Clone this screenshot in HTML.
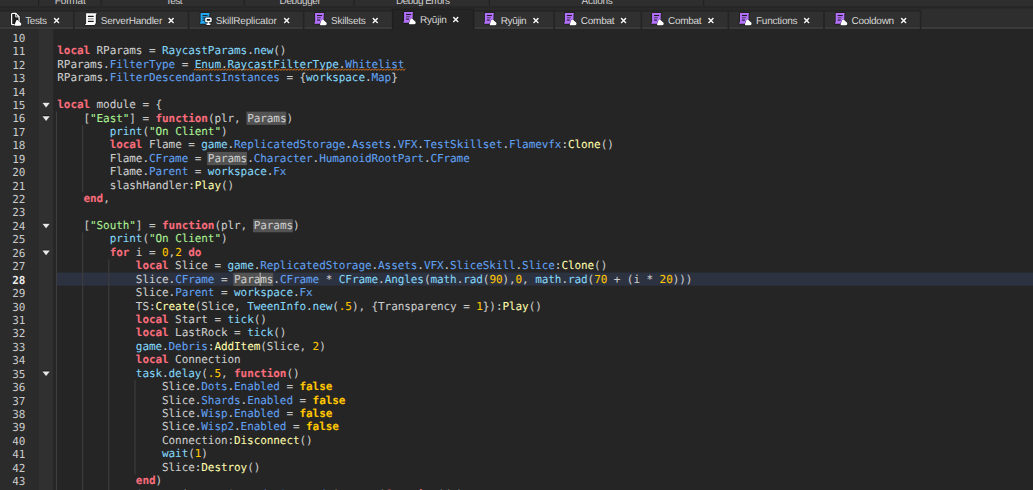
<!DOCTYPE html>
<html><head><meta charset="utf-8"><title>Script Editor</title>
<style>
html,body{margin:0;padding:0;background:#252525;overflow:hidden}
#root{position:relative;width:1033px;height:490px;overflow:hidden;background:#252525;font-family:"Liberation Sans",sans-serif}
#bg{position:absolute;left:0;top:0}
#rib{position:absolute;left:0;top:0;width:1033px;height:6.4px;overflow:hidden}
.rl{position:absolute;text-rendering:geometricPrecision;top:-4.4px;font-size:10px;line-height:12px;color:#d0d0d0;white-space:nowrap}
.tt{position:absolute;text-rendering:geometricPrecision;font-size:10px;line-height:12px;color:#d6d6d6;white-space:nowrap}
.ln,.cl{position:absolute;text-rendering:geometricPrecision;font-family:"DejaVu Sans Mono","Liberation Mono",monospace;font-size:11px;line-height:13.43px;height:13.43px;white-space:pre;letter-spacing:-0.077px;color:#cccccc}
.ln{left:12.3px;width:26px;color:#cacaca}
.ln.cur{font-weight:bold;color:#ececec}
.cl{left:57.30px;-webkit-text-stroke:0.08px}
.k{color:#f86d7c;font-weight:bold}
.b{color:#84d6f7}
.p{color:#61a1f1}
.s{color:#adf195}
.n{color:#ffc600}
.B{color:#ffc600;font-weight:bold}
.f{color:#fdfbac}
</style></head><body>
<div id="root">
<svg id="bg" width="1033" height="490" viewBox="0 0 1033 490">
<rect x="0.00" y="0.00" width="1033.00" height="6.60" fill="#2e2e2e"/>
<rect x="0.00" y="6.60" width="1033.00" height="1.80" fill="#262626"/>
<rect x="0.00" y="8.40" width="1033.00" height="18.60" fill="#2e2e2e"/>
<rect x="0.00" y="26.90" width="1033.00" height="2.20" fill="#3a3a3a"/>
<rect x="38.10" y="0.00" width="1.20" height="5.60" fill="#222222"/>
<rect x="100.60" y="0.00" width="1.20" height="5.60" fill="#222222"/>
<rect x="243.70" y="0.00" width="1.20" height="5.60" fill="#222222"/>
<rect x="353.50" y="0.00" width="1.20" height="5.60" fill="#222222"/>
<rect x="488.80" y="0.00" width="1.20" height="5.60" fill="#222222"/>
<rect x="703.10" y="0.00" width="1.20" height="5.60" fill="#222222"/>
<rect x="0.00" y="9.70" width="921.40" height="17.30" fill="#242424"/>
<rect x="0.00" y="11.55" width="73.00" height="15.35" fill="#303030"/>
<rect x="74.60" y="11.55" width="113.10" height="15.35" fill="#303030"/>
<rect x="189.30" y="11.55" width="113.50" height="15.35" fill="#303030"/>
<rect x="304.40" y="11.55" width="87.40" height="15.35" fill="#303030"/>
<rect x="474.50" y="11.55" width="78.90" height="15.35" fill="#303030"/>
<rect x="555.00" y="11.55" width="85.50" height="15.35" fill="#303030"/>
<rect x="642.10" y="11.55" width="85.50" height="15.35" fill="#303030"/>
<rect x="729.20" y="11.55" width="94.00" height="15.35" fill="#303030"/>
<rect x="824.80" y="11.55" width="95.00" height="15.35" fill="#303030"/>
<rect x="73.00" y="26.90" width="1.60" height="2.20" fill="#232323"/>
<rect x="187.70" y="26.90" width="1.60" height="2.20" fill="#232323"/>
<rect x="302.80" y="26.90" width="1.60" height="2.20" fill="#232323"/>
<rect x="391.80" y="26.90" width="1.60" height="2.20" fill="#232323"/>
<rect x="472.90" y="26.90" width="1.60" height="2.20" fill="#232323"/>
<rect x="553.40" y="26.90" width="1.60" height="2.20" fill="#232323"/>
<rect x="640.50" y="26.90" width="1.60" height="2.20" fill="#232323"/>
<rect x="727.60" y="26.90" width="1.60" height="2.20" fill="#232323"/>
<rect x="823.20" y="26.90" width="1.60" height="2.20" fill="#232323"/>
<rect x="919.80" y="26.90" width="1.60" height="2.20" fill="#232323"/>
<rect x="392.20" y="8.70" width="81.90" height="20.60" fill="#1f1f1f"/>
<rect x="393.40" y="9.70" width="79.50" height="19.60" fill="#252525"/>
<rect x="0.00" y="29.10" width="1033.00" height="460.90" fill="#252525"/>
<rect x="393.50" y="28.60" width="79.30" height="1.00" fill="#252525"/>
<rect x="0.00" y="29.10" width="38.60" height="460.90" fill="#2b2b2b"/>
<rect x="38.60" y="29.10" width="14.70" height="460.90" fill="#303030"/>
<rect x="57.00" y="272.54" width="976.00" height="13.13" fill="#2d3241"/>
<rect x="55.90" y="111.63" width="1.10" height="389.47" fill="#3e3e3e"/>
<rect x="82.08" y="125.06" width="1.10" height="67.15" fill="#3e3e3e"/>
<rect x="82.08" y="232.50" width="1.10" height="268.60" fill="#3e3e3e"/>
<rect x="108.27" y="259.36" width="1.10" height="241.74" fill="#3e3e3e"/>
<rect x="134.45" y="380.23" width="1.10" height="94.01" fill="#3e3e3e"/>
<rect x="246.43" y="111.63" width="39.88" height="13.23" fill="#535353"/>
<rect x="207.16" y="151.92" width="39.88" height="13.23" fill="#535353"/>
<rect x="252.98" y="219.07" width="39.88" height="13.23" fill="#535353"/>
<rect x="233.34" y="272.79" width="39.88" height="13.23" fill="#535353"/>
<path d="M193.87 70.21l1.5 -1.1l1.5 1.1l1.5 -1.1l1.5 1.1l1.5 -1.1l1.5 1.1l1.5 -1.1l1.5 1.1l1.5 -1.1l1.5 1.1l1.5 -1.1l1.5 1.1l1.5 -1.1l1.5 1.1l1.5 -1.1l1.5 1.1l1.5 -1.1l1.5 1.1l1.5 -1.1l1.5 1.1l1.5 -1.1l1.5 1.1l1.5 -1.1l1.5 1.1l1.5 -1.1l1.5 1.1l1.5 -1.1l1.5 1.1l1.5 -1.1l1.5 1.1l1.5 -1.1l1.5 1.1l1.5 -1.1l1.5 1.1l1.5 -1.1l1.5 1.1l1.5 -1.1l1.5 1.1l1.5 -1.1l1.5 1.1l1.5 -1.1l1.5 1.1l1.5 -1.1l1.5 1.1l1.5 -1.1l1.5 1.1l1.5 -1.1l1.5 1.1l1.5 -1.1l1.5 1.1l1.5 -1.1l1.5 1.1l1.5 -1.1l1.5 1.1l1.5 -1.1l1.5 1.1l1.5 -1.1l1.5 1.1l1.5 -1.1l1.5 1.1l1.5 -1.1l1.5 1.1l1.5 -1.1l1.5 1.1l1.5 -1.1l1.5 1.1l1.5 -1.1l1.5 1.1l1.5 -1.1l1.5 1.1l1.5 -1.1l1.5 1.1l1.5 -1.1l1.5 1.1l1.5 -1.1l1.5 1.1l1.5 -1.1l1.5 1.1l1.5 -1.1l1.5 1.1l1.5 -1.1l1.5 1.1l1.5 -1.1l1.5 1.1l1.5 -1.1l1.5 1.1l1.5 -1.1l1.5 1.1l1.5 -1.1l1.5 1.1l1.5 -1.1l1.5 1.1l1.5 -1.1l1.5 1.1l1.5 -1.1l1.5 1.1l1.5 -1.1l1.5 1.1l1.5 -1.1l1.5 1.1l1.5 -1.1l1.5 1.1l1.5 -1.1l1.5 1.1l1.5 -1.1l1.5 1.1l1.5 -1.1l1.5 1.1l1.5 -1.1l1.5 1.1l1.5 -1.1l1.5 1.1l1.5 -1.1l1.5 1.1l1.5 -1.1l1.5 1.1l1.5 -1.1l1.5 1.1l1.5 -1.1l1.5 1.1l1.5 -1.1l1.5 1.1l1.5 -1.1l1.5 1.1l1.5 -1.1l1.5 1.1l1.5 -1.1l1.5 1.1l1.5 -1.1l1.5 1.1l1.5 -1.1l1.5 1.1l1.5 -1.1l1.5 1.1l1.5 -1.1l1.5 1.1l1.5 -1.1l1.5 1.1l1.5 -1.1l1.5 1.1l1.5 -1.1" fill="none" stroke="#d9741f" stroke-width="1.0" stroke-linejoin="round"/>
<rect x="259.68" y="272.59" width="1.00" height="13.13" fill="#c4c4c4"/>
<path d="M42.2 101.90h7.8v.6l-3.9 4.4l-3.9-4.4z" fill="#111" opacity=".7"/>
<path d="M42.4 102.80h7.4l-3.7 4.7z" fill="#e8e8e8"/>
<path d="M42.2 115.33h7.8v.6l-3.9 4.4l-3.9-4.4z" fill="#111" opacity=".7"/>
<path d="M42.4 116.23h7.4l-3.7 4.7z" fill="#e8e8e8"/>
<path d="M42.2 222.77h7.8v.6l-3.9 4.4l-3.9-4.4z" fill="#111" opacity=".7"/>
<path d="M42.4 223.67h7.4l-3.7 4.7z" fill="#e8e8e8"/>
<path d="M42.2 249.63h7.8v.6l-3.9 4.4l-3.9-4.4z" fill="#111" opacity=".7"/>
<path d="M42.4 250.53h7.4l-3.7 4.7z" fill="#e8e8e8"/>
<path d="M42.2 370.50h7.8v.6l-3.9 4.4l-3.9-4.4z" fill="#111" opacity=".7"/>
<path d="M42.4 371.40h7.4l-3.7 4.7z" fill="#e8e8e8"/>
<g transform="translate(11.00 13.20)"><path d="M1.6 .1h3.2l3.3 3.5v6.9c0 .6-.4 1-1 1H1.6c-.6 0-1-.4-1-1V1.1c0-.6.4-1 1-1z" fill="#1d1d1d" stroke="#0c0c0c" stroke-width="2.6" opacity=".6"/><path d="M1.6 .1h3.2l3.3 3.5v6.9c0 .6-.4 1-1 1H1.6c-.6 0-1-.4-1-1V1.1c0-.6.4-1 1-1z" fill="#1d1d1d" stroke="#ffffff" stroke-width="1.25"/><path d="M4.7 .3v3.4h3.2" fill="none" stroke="#ffffff" stroke-width=".9"/></g><g transform="translate(14.30 19.90)"><path d="M2.65 0C3 0 3.3.2 3.5.4L6.6 3.2C7.1 3.7 7.1 4.6 6.8 5.1 6.6 5.5 6.2 5.8 5.6 5.8H1.3C.6 5.8.2 5.3.4 4.5L1.9.7C2 .3 2.3 0 2.65 0Z" fill="#0c0c0c" stroke="#0c0c0c" stroke-width="1.0" opacity=".5"/><path d="M2.65 0C3 0 3.3.2 3.5.4L6.6 3.2C7.1 3.7 7.1 4.6 6.8 5.1 6.6 5.5 6.2 5.8 5.6 5.8H1.3C.6 5.8.2 5.3.4 4.5L1.9.7C2 .3 2.3 0 2.65 0Z" fill="#ffffff"/></g>
<path d="M54.10 18.15l4.9 4.9m0-4.9l-4.9 4.9" stroke="#101010" stroke-width="2.8" opacity=".45" fill="none"/>
<path d="M54.10 18.15l4.9 4.9m0-4.9l-4.9 4.9" stroke="#f2f2f2" stroke-width="1.5" fill="none"/>
<g transform="translate(84.90 13.20)"><path d="M1.4 -.4h10.6l.5.5-1 1.7v8l-1.6 2.4H-.4l-.3-.8 1.6-1.6z" fill="#0c0c0c" opacity=".75"/><path d="M1.2 0h10.7l-1 1.7v8.2l-1.2 1.9H0l1.2-1.4z" fill="#ffffff"/><path d="M3 3.1h5.8M3 8.2h5.8" stroke="#1a1a1a" stroke-width="1.15"/><path d="M3 5.65h5.8" stroke="#8a8a8a" stroke-width="1.15"/></g>
<path d="M168.70 18.15l4.9 4.9m0-4.9l-4.9 4.9" stroke="#101010" stroke-width="2.8" opacity=".45" fill="none"/>
<path d="M168.70 18.15l4.9 4.9m0-4.9l-4.9 4.9" stroke="#f2f2f2" stroke-width="1.5" fill="none"/>
<g transform="translate(199.80 13.00)"><path d="M.8 0H10l-.6 1.4v7.8l-.8 1.6H0V10l.8-1z" fill="#0c0c0c" stroke="#0c0c0c" stroke-width="1.5" opacity=".5"/><path d="M.8 0H10l-.6 1.4v7.8l-.8 1.6H0V10l.8-1z" fill="#25a8f3"/><path d="M2.7 2.6h5.1" stroke="#1b242c" stroke-width="1.15"/><path d="M2.7 4.9h2.4" stroke="#1b242c" stroke-width="1.15"/><path d="M2.7 7.2h2.0" stroke="#1b242c" stroke-width="1.15"/><rect x="4.7" y="3.8" width="7.9" height="6.1" rx="1.7" fill="#0c0c0c" opacity=".8"/><path d="M6.0 10.0h5v2.7h-5z" fill="#0c0c0c" opacity=".5"/><rect x="5.4" y="4.5" width="6.5" height="4.8" rx="1.2" fill="#fff"/><rect x="6.9" y="6.1" width="3.5" height="1.7" rx=".5" fill="#0c0c0c"/><path d="M7.9 9.2h1.5v1.4h1.2v1.5H6.6v-1.5h1.3z" fill="#fff"/></g>
<path d="M284.20 18.15l4.9 4.9m0-4.9l-4.9 4.9" stroke="#101010" stroke-width="2.8" opacity=".45" fill="none"/>
<path d="M284.20 18.15l4.9 4.9m0-4.9l-4.9 4.9" stroke="#f2f2f2" stroke-width="1.5" fill="none"/>
<g transform="translate(314.30 12.90)"><path d="M.8 0H10l-.6 1.4v7.8l-.8 1.6H0V10l.8-1z" fill="#0c0c0c" stroke="#0c0c0c" stroke-width="1.5" opacity=".5"/><path d="M.8 0H10l-.6 1.4v7.8l-.8 1.6H0V10l.8-1z" fill="#b470ff"/><path d="M2.7 2.6h5.1" stroke="#1f1a26" stroke-width="1.15"/><path d="M2.7 4.9h3.9" stroke="#50406e" stroke-width="1.15"/><path d="M2.7 7.2h3.0" stroke="#1f1a26" stroke-width="1.15"/></g><g transform="translate(319.70 19.40)"><path d="M2.65 0C3 0 3.3.2 3.5.4L6.6 3.2C7.1 3.7 7.1 4.6 6.8 5.1 6.6 5.5 6.2 5.8 5.6 5.8H1.3C.6 5.8.2 5.3.4 4.5L1.9.7C2 .3 2.3 0 2.65 0Z" fill="#0c0c0c" stroke="#0c0c0c" stroke-width="1.0" opacity=".5"/><path d="M2.65 0C3 0 3.3.2 3.5.4L6.6 3.2C7.1 3.7 7.1 4.6 6.8 5.1 6.6 5.5 6.2 5.8 5.6 5.8H1.3C.6 5.8.2 5.3.4 4.5L1.9.7C2 .3 2.3 0 2.65 0Z" fill="#ffffff"/></g>
<path d="M372.80 18.15l4.9 4.9m0-4.9l-4.9 4.9" stroke="#101010" stroke-width="2.8" opacity=".45" fill="none"/>
<path d="M372.80 18.15l4.9 4.9m0-4.9l-4.9 4.9" stroke="#f2f2f2" stroke-width="1.5" fill="none"/>
<g transform="translate(403.30 11.90)"><path d="M.8 0H10l-.6 1.4v7.8l-.8 1.6H0V10l.8-1z" fill="#0c0c0c" stroke="#0c0c0c" stroke-width="1.5" opacity=".5"/><path d="M.8 0H10l-.6 1.4v7.8l-.8 1.6H0V10l.8-1z" fill="#b470ff"/><path d="M2.7 2.6h5.1" stroke="#1f1a26" stroke-width="1.15"/><path d="M2.7 4.9h3.9" stroke="#50406e" stroke-width="1.15"/><path d="M2.7 7.2h3.0" stroke="#1f1a26" stroke-width="1.15"/></g><g transform="translate(408.70 18.40)"><path d="M2.65 0C3 0 3.3.2 3.5.4L6.6 3.2C7.1 3.7 7.1 4.6 6.8 5.1 6.6 5.5 6.2 5.8 5.6 5.8H1.3C.6 5.8.2 5.3.4 4.5L1.9.7C2 .3 2.3 0 2.65 0Z" fill="#0c0c0c" stroke="#0c0c0c" stroke-width="1.0" opacity=".5"/><path d="M2.65 0C3 0 3.3.2 3.5.4L6.6 3.2C7.1 3.7 7.1 4.6 6.8 5.1 6.6 5.5 6.2 5.8 5.6 5.8H1.3C.6 5.8.2 5.3.4 4.5L1.9.7C2 .3 2.3 0 2.65 0Z" fill="#ffffff"/></g>
<path d="M453.30 17.15l4.9 4.9m0-4.9l-4.9 4.9" stroke="#101010" stroke-width="2.8" opacity=".45" fill="none"/>
<path d="M453.30 17.15l4.9 4.9m0-4.9l-4.9 4.9" stroke="#f2f2f2" stroke-width="1.5" fill="none"/>
<g transform="translate(484.10 12.90)"><path d="M.8 0H10l-.6 1.4v7.8l-.8 1.6H0V10l.8-1z" fill="#0c0c0c" stroke="#0c0c0c" stroke-width="1.5" opacity=".5"/><path d="M.8 0H10l-.6 1.4v7.8l-.8 1.6H0V10l.8-1z" fill="#b470ff"/><path d="M2.7 2.6h5.1" stroke="#1f1a26" stroke-width="1.15"/><path d="M2.7 4.9h3.9" stroke="#50406e" stroke-width="1.15"/><path d="M2.7 7.2h3.0" stroke="#1f1a26" stroke-width="1.15"/></g><g transform="translate(489.50 19.40)"><path d="M2.65 0C3 0 3.3.2 3.5.4L6.6 3.2C7.1 3.7 7.1 4.6 6.8 5.1 6.6 5.5 6.2 5.8 5.6 5.8H1.3C.6 5.8.2 5.3.4 4.5L1.9.7C2 .3 2.3 0 2.65 0Z" fill="#0c0c0c" stroke="#0c0c0c" stroke-width="1.0" opacity=".5"/><path d="M2.65 0C3 0 3.3.2 3.5.4L6.6 3.2C7.1 3.7 7.1 4.6 6.8 5.1 6.6 5.5 6.2 5.8 5.6 5.8H1.3C.6 5.8.2 5.3.4 4.5L1.9.7C2 .3 2.3 0 2.65 0Z" fill="#ffffff"/></g>
<path d="M533.50 18.15l4.9 4.9m0-4.9l-4.9 4.9" stroke="#101010" stroke-width="2.8" opacity=".45" fill="none"/>
<path d="M533.50 18.15l4.9 4.9m0-4.9l-4.9 4.9" stroke="#f2f2f2" stroke-width="1.5" fill="none"/>
<g transform="translate(564.10 12.90)"><path d="M.8 0H10l-.6 1.4v7.8l-.8 1.6H0V10l.8-1z" fill="#0c0c0c" stroke="#0c0c0c" stroke-width="1.5" opacity=".5"/><path d="M.8 0H10l-.6 1.4v7.8l-.8 1.6H0V10l.8-1z" fill="#b470ff"/><path d="M2.7 2.6h5.1" stroke="#1f1a26" stroke-width="1.15"/><path d="M2.7 4.9h3.9" stroke="#50406e" stroke-width="1.15"/><path d="M2.7 7.2h3.0" stroke="#1f1a26" stroke-width="1.15"/></g><g transform="translate(569.50 19.40)"><path d="M2.65 0C3 0 3.3.2 3.5.4L6.6 3.2C7.1 3.7 7.1 4.6 6.8 5.1 6.6 5.5 6.2 5.8 5.6 5.8H1.3C.6 5.8.2 5.3.4 4.5L1.9.7C2 .3 2.3 0 2.65 0Z" fill="#0c0c0c" stroke="#0c0c0c" stroke-width="1.0" opacity=".5"/><path d="M2.65 0C3 0 3.3.2 3.5.4L6.6 3.2C7.1 3.7 7.1 4.6 6.8 5.1 6.6 5.5 6.2 5.8 5.6 5.8H1.3C.6 5.8.2 5.3.4 4.5L1.9.7C2 .3 2.3 0 2.65 0Z" fill="#ffffff"/></g>
<path d="M621.10 18.15l4.9 4.9m0-4.9l-4.9 4.9" stroke="#101010" stroke-width="2.8" opacity=".45" fill="none"/>
<path d="M621.10 18.15l4.9 4.9m0-4.9l-4.9 4.9" stroke="#f2f2f2" stroke-width="1.5" fill="none"/>
<g transform="translate(651.30 12.90)"><path d="M.8 0H10l-.6 1.4v7.8l-.8 1.6H0V10l.8-1z" fill="#0c0c0c" stroke="#0c0c0c" stroke-width="1.5" opacity=".5"/><path d="M.8 0H10l-.6 1.4v7.8l-.8 1.6H0V10l.8-1z" fill="#b470ff"/><path d="M2.7 2.6h5.1" stroke="#1f1a26" stroke-width="1.15"/><path d="M2.7 4.9h3.9" stroke="#50406e" stroke-width="1.15"/><path d="M2.7 7.2h3.0" stroke="#1f1a26" stroke-width="1.15"/></g><g transform="translate(656.70 19.40)"><path d="M2.65 0C3 0 3.3.2 3.5.4L6.6 3.2C7.1 3.7 7.1 4.6 6.8 5.1 6.6 5.5 6.2 5.8 5.6 5.8H1.3C.6 5.8.2 5.3.4 4.5L1.9.7C2 .3 2.3 0 2.65 0Z" fill="#0c0c0c" stroke="#0c0c0c" stroke-width="1.0" opacity=".5"/><path d="M2.65 0C3 0 3.3.2 3.5.4L6.6 3.2C7.1 3.7 7.1 4.6 6.8 5.1 6.6 5.5 6.2 5.8 5.6 5.8H1.3C.6 5.8.2 5.3.4 4.5L1.9.7C2 .3 2.3 0 2.65 0Z" fill="#ffffff"/></g>
<path d="M708.50 18.15l4.9 4.9m0-4.9l-4.9 4.9" stroke="#101010" stroke-width="2.8" opacity=".45" fill="none"/>
<path d="M708.50 18.15l4.9 4.9m0-4.9l-4.9 4.9" stroke="#f2f2f2" stroke-width="1.5" fill="none"/>
<g transform="translate(739.20 12.90)"><path d="M.8 0H10l-.6 1.4v7.8l-.8 1.6H0V10l.8-1z" fill="#0c0c0c" stroke="#0c0c0c" stroke-width="1.5" opacity=".5"/><path d="M.8 0H10l-.6 1.4v7.8l-.8 1.6H0V10l.8-1z" fill="#b470ff"/><path d="M2.7 2.6h5.1" stroke="#1f1a26" stroke-width="1.15"/><path d="M2.7 4.9h3.9" stroke="#50406e" stroke-width="1.15"/><path d="M2.7 7.2h3.0" stroke="#1f1a26" stroke-width="1.15"/></g><g transform="translate(744.60 19.40)"><path d="M2.65 0C3 0 3.3.2 3.5.4L6.6 3.2C7.1 3.7 7.1 4.6 6.8 5.1 6.6 5.5 6.2 5.8 5.6 5.8H1.3C.6 5.8.2 5.3.4 4.5L1.9.7C2 .3 2.3 0 2.65 0Z" fill="#0c0c0c" stroke="#0c0c0c" stroke-width="1.0" opacity=".5"/><path d="M2.65 0C3 0 3.3.2 3.5.4L6.6 3.2C7.1 3.7 7.1 4.6 6.8 5.1 6.6 5.5 6.2 5.8 5.6 5.8H1.3C.6 5.8.2 5.3.4 4.5L1.9.7C2 .3 2.3 0 2.65 0Z" fill="#ffffff"/></g>
<path d="M804.20 18.15l4.9 4.9m0-4.9l-4.9 4.9" stroke="#101010" stroke-width="2.8" opacity=".45" fill="none"/>
<path d="M804.20 18.15l4.9 4.9m0-4.9l-4.9 4.9" stroke="#f2f2f2" stroke-width="1.5" fill="none"/>
<g transform="translate(834.90 12.90)"><path d="M.8 0H10l-.6 1.4v7.8l-.8 1.6H0V10l.8-1z" fill="#0c0c0c" stroke="#0c0c0c" stroke-width="1.5" opacity=".5"/><path d="M.8 0H10l-.6 1.4v7.8l-.8 1.6H0V10l.8-1z" fill="#b470ff"/><path d="M2.7 2.6h5.1" stroke="#1f1a26" stroke-width="1.15"/><path d="M2.7 4.9h3.9" stroke="#50406e" stroke-width="1.15"/><path d="M2.7 7.2h3.0" stroke="#1f1a26" stroke-width="1.15"/></g><g transform="translate(840.30 19.40)"><path d="M2.65 0C3 0 3.3.2 3.5.4L6.6 3.2C7.1 3.7 7.1 4.6 6.8 5.1 6.6 5.5 6.2 5.8 5.6 5.8H1.3C.6 5.8.2 5.3.4 4.5L1.9.7C2 .3 2.3 0 2.65 0Z" fill="#0c0c0c" stroke="#0c0c0c" stroke-width="1.0" opacity=".5"/><path d="M2.65 0C3 0 3.3.2 3.5.4L6.6 3.2C7.1 3.7 7.1 4.6 6.8 5.1 6.6 5.5 6.2 5.8 5.6 5.8H1.3C.6 5.8.2 5.3.4 4.5L1.9.7C2 .3 2.3 0 2.65 0Z" fill="#ffffff"/></g>
<path d="M901.20 18.15l4.9 4.9m0-4.9l-4.9 4.9" stroke="#101010" stroke-width="2.8" opacity=".45" fill="none"/>
<path d="M901.20 18.15l4.9 4.9m0-4.9l-4.9 4.9" stroke="#f2f2f2" stroke-width="1.5" fill="none"/>
</svg>
<div id="rib">
<div class="rl" id="rl0" style="left:54.7px;letter-spacing:-0.112px">Format</div>
<div class="rl" id="rl1" style="left:165.8px;letter-spacing:-0.536px">Test</div>
<div class="rl" id="rl2" style="left:279.6px;letter-spacing:-0.378px">Debugger</div>
<div class="rl" id="rl3" style="left:396.0px;letter-spacing:-0.506px">Debug Errors</div>
<div class="rl" id="rl4" style="left:581.6px;letter-spacing:-0.271px">Actions</div>
</div>
<div class="tt" id="tt0" style="left:25.2px;top:15.0px;transform:translateY(0.7px);letter-spacing:-0.389px">Tests</div>
<div class="tt" id="tt1" style="left:100.8px;top:15.0px;transform:translateY(0.7px);letter-spacing:-0.253px">ServerHandler</div>
<div class="tt" id="tt2" style="left:215.7px;top:15.0px;transform:translateY(0.7px);letter-spacing:-0.164px">SkillReplicator</div>
<div class="tt" id="tt3" style="left:331.0px;top:15.0px;transform:translateY(0.7px);letter-spacing:-0.243px">Skillsets</div>
<div class="tt" id="tt4" style="left:420.0px;top:14.0px;transform:translateY(0.7px);letter-spacing:-0.183px">Ryūjin</div>
<div class="tt" id="tt5" style="left:500.8px;top:15.0px;transform:translateY(0.7px);letter-spacing:-0.399px">Ryūjin</div>
<div class="tt" id="tt6" style="left:580.8px;top:15.0px;transform:translateY(0.7px);letter-spacing:-0.253px">Combat</div>
<div class="tt" id="tt7" style="left:668.0px;top:15.0px;transform:translateY(0.7px);letter-spacing:-0.303px">Combat</div>
<div class="tt" id="tt8" style="left:755.9px;top:15.0px;transform:translateY(0.7px);letter-spacing:-0.207px">Functions</div>
<div class="tt" id="tt9" style="left:851.6px;top:15.0px;transform:translateY(0.7px);letter-spacing:-0.273px">Cooldown</div>
<div class="ln" style="top:31px;transform:translateY(0.90px)">10</div>
<div class="ln" style="top:45px;transform:translateY(0.33px)">11</div>
<div class="cl" style="top:44px;transform:translateY(0.38px)"><span class="k">local</span> RParams = <span class="b">RaycastParams</span>.<span class="b">new</span>()</div>
<div class="ln" style="top:58px;transform:translateY(0.76px)">12</div>
<div class="cl" style="top:57px;transform:translateY(0.81px)">RParams.<span class="p">FilterType</span> = <span class="w"><span class="b">Enum</span>.<span class="b">RaycastFilterType</span>.<span class="p">Whitelist</span></span></div>
<div class="ln" style="top:72px;transform:translateY(0.19px)">13</div>
<div class="cl" style="top:71px;transform:translateY(0.24px)">RParams.<span class="p">FilterDescendantsInstances</span> = {<span class="b">workspace</span>.<span class="p">Map</span>}</div>
<div class="ln" style="top:85px;transform:translateY(0.62px)">14</div>
<div class="ln" style="top:99px;transform:translateY(0.05px)">15</div>
<div class="cl" style="top:98px;transform:translateY(0.10px)"><span class="k">local</span> module = {</div>
<div class="ln" style="top:112px;transform:translateY(0.48px)">16</div>
<div class="cl" style="top:111px;transform:translateY(0.53px)">    [<span class="s">"East"</span>] = <span class="k">function</span>(plr, <span class="h">Params</span>)</div>
<div class="ln" style="top:125px;transform:translateY(0.91px)">17</div>
<div class="cl" style="top:124px;transform:translateY(0.96px)">        <span class="b">print</span>(<span class="s">"On Client"</span>)</div>
<div class="ln" style="top:139px;transform:translateY(0.34px)">18</div>
<div class="cl" style="top:138px;transform:translateY(0.39px)">        <span class="k">local</span> Flame = <span class="b">game</span>.<span class="p">ReplicatedStorage</span>.<span class="p">Assets</span>.<span class="p">VFX</span>.<span class="p">TestSkillset</span>.<span class="p">Flamevfx</span>:<span class="f">Clone</span>()</div>
<div class="ln" style="top:152px;transform:translateY(0.77px)">19</div>
<div class="cl" style="top:151px;transform:translateY(0.82px)">        Flame.<span class="p">CFrame</span> = <span class="h">Params</span>.<span class="p">Character</span>.<span class="p">HumanoidRootPart</span>.<span class="p">CFrame</span></div>
<div class="ln" style="top:166px;transform:translateY(0.20px)">20</div>
<div class="cl" style="top:165px;transform:translateY(0.25px)">        Flame.<span class="p">Parent</span> = <span class="b">workspace</span>.<span class="p">Fx</span></div>
<div class="ln" style="top:179px;transform:translateY(0.63px)">21</div>
<div class="cl" style="top:178px;transform:translateY(0.68px)">        slashHandler:<span class="f">Play</span>()</div>
<div class="ln" style="top:193px;transform:translateY(0.06px)">22</div>
<div class="cl" style="top:192px;transform:translateY(0.11px)">    <span class="k">end</span>,</div>
<div class="ln" style="top:206px;transform:translateY(0.49px)">23</div>
<div class="ln" style="top:219px;transform:translateY(0.92px)">24</div>
<div class="cl" style="top:218px;transform:translateY(0.97px)">    [<span class="s">"South"</span>] = <span class="k">function</span>(plr, <span class="h">Params</span>)</div>
<div class="ln" style="top:233px;transform:translateY(0.35px)">25</div>
<div class="cl" style="top:232px;transform:translateY(0.40px)">        <span class="b">print</span>(<span class="s">"On Client"</span>)</div>
<div class="ln" style="top:246px;transform:translateY(0.78px)">26</div>
<div class="cl" style="top:245px;transform:translateY(0.83px)">        <span class="k">for</span> i = <span class="n">0</span>,<span class="n">2</span> <span class="k">do</span></div>
<div class="ln" style="top:260px;transform:translateY(0.21px)">27</div>
<div class="cl" style="top:259px;transform:translateY(0.26px)">            <span class="k">local</span> Slice = <span class="b">game</span>.<span class="p">ReplicatedStorage</span>.<span class="p">Assets</span>.<span class="p">VFX</span>.<span class="p">SliceSkill</span>.<span class="p">Slice</span>:<span class="f">Clone</span>()</div>
<div class="ln cur" style="top:273px;transform:translateY(0.64px)">28</div>
<div class="cl" style="top:272px;transform:translateY(0.69px)">            Slice.<span class="p">CFrame</span> = <span class="h">Params</span>.<span class="p">CFrame</span> * <span class="b">CFrame</span>.<span class="b">Angles</span>(<span class="b">math</span>.<span class="b">rad</span>(<span class="n">90</span>),<span class="n">0</span>, <span class="b">math</span>.<span class="b">rad</span>(<span class="n">70</span> + (i * <span class="n">20</span>)))</div>
<div class="ln" style="top:287px;transform:translateY(0.07px)">29</div>
<div class="cl" style="top:286px;transform:translateY(0.12px)">            Slice.<span class="p">Parent</span> = <span class="b">workspace</span>.<span class="p">Fx</span></div>
<div class="ln" style="top:300px;transform:translateY(0.50px)">30</div>
<div class="cl" style="top:299px;transform:translateY(0.55px)">            TS:<span class="f">Create</span>(Slice, <span class="b">TweenInfo</span>.<span class="b">new</span>(<span class="n">.5</span>), {Transparency = <span class="n">1</span>}):<span class="f">Play</span>()</div>
<div class="ln" style="top:313px;transform:translateY(0.93px)">31</div>
<div class="cl" style="top:312px;transform:translateY(0.98px)">            <span class="k">local</span> Start = <span class="b">tick</span>()</div>
<div class="ln" style="top:327px;transform:translateY(0.36px)">32</div>
<div class="cl" style="top:326px;transform:translateY(0.41px)">            <span class="k">local</span> LastRock = <span class="b">tick</span>()</div>
<div class="ln" style="top:340px;transform:translateY(0.79px)">33</div>
<div class="cl" style="top:339px;transform:translateY(0.84px)">            <span class="b">game</span>.<span class="p">Debris</span>:<span class="f">AddItem</span>(Slice, <span class="n">2</span>)</div>
<div class="ln" style="top:354px;transform:translateY(0.22px)">34</div>
<div class="cl" style="top:353px;transform:translateY(0.27px)">            <span class="k">local</span> Connection</div>
<div class="ln" style="top:367px;transform:translateY(0.65px)">35</div>
<div class="cl" style="top:366px;transform:translateY(0.70px)">            <span class="b">task</span>.<span class="b">delay</span>(<span class="n">.5</span>, <span class="k">function</span>()</div>
<div class="ln" style="top:381px;transform:translateY(0.08px)">36</div>
<div class="cl" style="top:380px;transform:translateY(0.13px)">                Slice.<span class="p">Dots</span>.<span class="p">Enabled</span> = <span class="B">false</span></div>
<div class="ln" style="top:394px;transform:translateY(0.51px)">37</div>
<div class="cl" style="top:393px;transform:translateY(0.56px)">                Slice.<span class="p">Shards</span>.<span class="p">Enabled</span> = <span class="B">false</span></div>
<div class="ln" style="top:407px;transform:translateY(0.94px)">38</div>
<div class="cl" style="top:406px;transform:translateY(0.99px)">                Slice.<span class="p">Wisp</span>.<span class="p">Enabled</span> = <span class="B">false</span></div>
<div class="ln" style="top:421px;transform:translateY(0.37px)">39</div>
<div class="cl" style="top:420px;transform:translateY(0.42px)">                Slice.<span class="p">Wisp2</span>.<span class="p">Enabled</span> = <span class="B">false</span></div>
<div class="ln" style="top:434px;transform:translateY(0.80px)">40</div>
<div class="cl" style="top:433px;transform:translateY(0.85px)">                Connection:<span class="f">Disconnect</span>()</div>
<div class="ln" style="top:448px;transform:translateY(0.23px)">41</div>
<div class="cl" style="top:447px;transform:translateY(0.28px)">                <span class="b">wait</span>(<span class="n">1</span>)</div>
<div class="ln" style="top:461px;transform:translateY(0.66px)">42</div>
<div class="cl" style="top:460px;transform:translateY(0.71px)">                Slice:<span class="f">Destroy</span>()</div>
<div class="ln" style="top:475px;transform:translateY(0.09px)">43</div>
<div class="cl" style="top:474px;transform:translateY(0.14px)">            <span class="k">end</span>)</div>
<div class="ln" style="top:488px;transform:translateY(0.52px)">44</div>
<div class="cl" style="top:487px;transform:translateY(0.92px)">            Connection = RS.<span class="p">RenderStepped</span>:<span class="f">Connect</span>(<span class="k">function</span>(dt)</div>
</div>
</body></html>
